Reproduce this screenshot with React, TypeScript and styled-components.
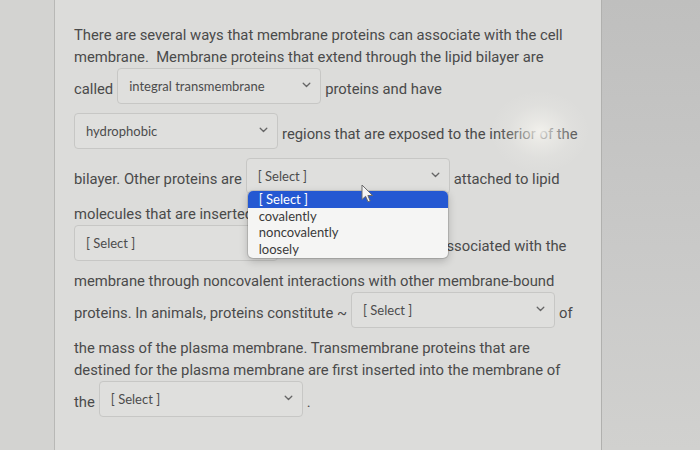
import React from 'react';
import styled, { createGlobalStyle } from 'styled-components';

const GlobalStyle = createGlobalStyle`
  html, body {
    margin: 0;
    padding: 0;
  }
  body {
    background: #d5d5d3;
    font-family: Roboto, 'Liberation Sans', sans-serif;
  }
`;

const elements = {
  page: styled.div`
    position: relative;
    display: flex;
    width: 700px;
    height: 450px;
    overflow: hidden;
    background: #d4d4d2;
  `,
  gutter: styled.div`
    width: 54px;
    flex-shrink: 0;
    background: #d3d3d1;
  `,
  panel: styled.main`
    width: 548px;
    flex-shrink: 0;
    box-sizing: border-box;
    padding: 24px 0 0 19px;
    border-left: 1px solid #b8b8b6;
    border-right: 1px solid #b0b0ae;
    background: #dcdcda;
  `,
  side: styled.div`
    flex: 1;
    background: linear-gradient(180deg, #bfbfbe 0%, #c9c9c8 55%, #d1d1cf 100%);
  `,
  question: styled.p`
    margin: 0;
    font-size: 14.8px;
    line-height: 22px;
    color: #4a4a4a;
    white-space: nowrap;
  `,
  select: styled.span<{ $lead?: boolean }>`
    position: relative;
    display: inline-flex;
    align-items: center;
    box-sizing: border-box;
    width: 204px;
    height: 36px;
    margin: 0 4px 9px ${({ $lead }) => ($lead ? '0' : '4px')};
    padding: 0 9px 0 11px;
    vertical-align: middle;
    border: 1px solid #c7c7c5;
    border-radius: 4px;
    background: #dfdfdd;
    font-family: Lato, 'Open Sans', sans-serif;
    font-size: 13px;
    color: #4c4c4c;
  `,
  value: styled.span`
    flex: 1;
    white-space: nowrap;
  `,
  chevron: styled.svg`
    flex-shrink: 0;
    margin-bottom: 3px;
  `,
  listbox: styled.ul`
    position: absolute;
    top: calc(100% - 2px);
    left: 1px;
    right: 1px;
    z-index: 2;
    margin: 0;
    padding: 0 0 1px;
    list-style: none;
    overflow: hidden;
    border-radius: 5px;
    background: #f5f5f4;
    box-shadow: 0 0 0 1px rgba(0, 0, 0, 0.12), 0 3px 8px rgba(0, 0, 0, 0.22);
    font-family: Lato, 'Open Sans', sans-serif;
    font-size: 13px;
    line-height: 16.5px;
    color: #3a3a3a;
    text-align: left;
  `,
  option: styled.li<{ $active?: boolean }>`
    padding: 0 11px;
    background: ${({ $active }) => ($active ? '#2458d2' : 'transparent')};
    color: ${({ $active }) => ($active ? '#ffffff' : '#3a3a3a')};
  `,
  cursor: styled.svg`
    position: absolute;
    left: 361px;
    top: 184px;
    z-index: 3;
  `,
  glare: styled.div`
    position: absolute;
    left: 490px;
    top: 90px;
    width: 100px;
    height: 80px;
    pointer-events: none;
    background: radial-gradient(ellipse at 50% 52%, rgba(244, 243, 238, 0.9) 0%, rgba(244, 243, 238, 0.5) 20%, rgba(244, 243, 238, 0.15) 45%, rgba(244, 243, 238, 0) 70%);
  `,
};

const Chevron = () => (
  <elements.chevron width='9' height='6' viewBox='0 0 9 6'>
    <path d='M1.2 1.2 L4.5 4.5 L7.8 1.2' fill='none' stroke='#666' strokeWidth='1.3' strokeLinecap='round' strokeLinejoin='round' />
  </elements.chevron>
);

const Dropdown: React.FC<{ value: string; options?: string[]; lead?: boolean }> = function dropdown({ value, options, lead }) {
  return (
    <elements.select $lead={lead}>
      <elements.value>{value}</elements.value>
      <Chevron />
      {options ? (
        <elements.listbox>
          {options.map((o, i) => (
            <elements.option key={o} $active={i === 0}>
              {o}
            </elements.option>
          ))}
        </elements.listbox>
      ) : null}
    </elements.select>
  );
};

const bindingOptions = ['[ Select ]', 'covalently', 'noncovalently', 'loosely'];

export default function App() {
  return (
    <>
      <GlobalStyle />
      <elements.page>
        <elements.gutter />
        <elements.panel>
          <elements.question>
            There are several ways that membrane proteins can associate with the cell
            <br />
            membrane.&nbsp; Membrane proteins that extend through the lipid bilayer are
            <br />
            called
            <Dropdown value='integral transmembrane' />
            proteins and have
            <br />
            <Dropdown value='hydrophobic' lead />
            regions that are exposed to the interior of the
            <br />
            bilayer. Other proteins are
            <Dropdown value='[ Select ]' options={bindingOptions} />
            attached to lipid
            <br />
            molecules that are inserted into the bilayer.
            <br />
            <Dropdown value='[ Select ]' lead />
            membrane proteins are associated with the
            <br />
            membrane through noncovalent interactions with other membrane-bound
            <br />
            proteins. In animals, proteins constitute ~
            <Dropdown value='[ Select ]' />
            of
            <br />
            the mass of the plasma membrane. Transmembrane proteins that are
            <br />
            destined for the plasma membrane are first inserted into the membrane of
            <br />
            the
            <Dropdown value='[ Select ]' />.
          </elements.question>
        </elements.panel>
        <elements.side />
        <elements.glare />
        <elements.cursor width='13' height='19' viewBox='0 0 13 19'>
          <path d='M1 1 L1 15.5 L4.6 12.3 L7 17.8 L9.2 16.9 L6.9 11.5 L11.6 11.5 Z' fill='#f4f4f4' stroke='#6a6a6a' strokeWidth='1' strokeLinejoin='round' />
        </elements.cursor>
      </elements.page>
    </>
  );
}
